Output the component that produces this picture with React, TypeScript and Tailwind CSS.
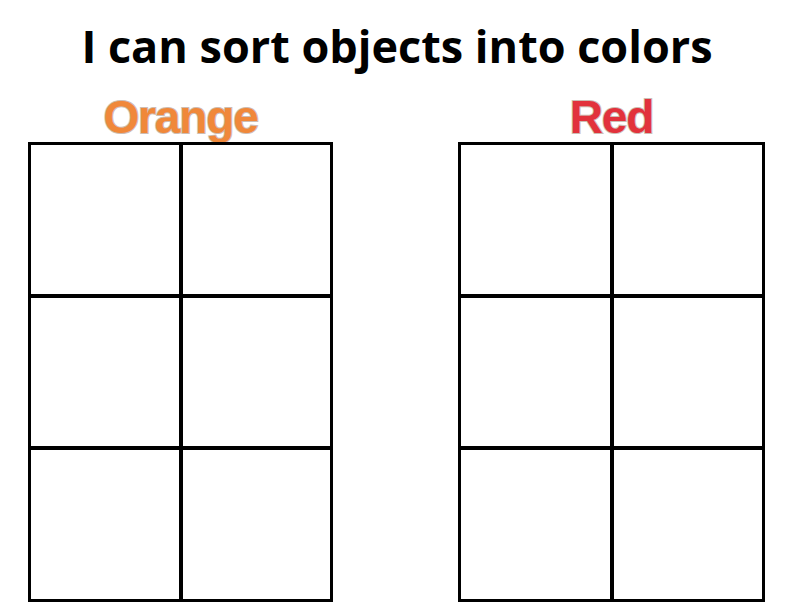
import React from 'react'

function SortGrid() {
  return (
    <div className="grid grid-cols-2 grid-rows-3 gap-[4px] bg-black p-[3px] h-[460px]">
      {Array.from({ length: 6 }).map((_, i) => (
        <div key={i} className="bg-white" />
      ))}
    </div>
  )
}

function ColorColumn({ label, color, width }: { label: string; color: string; width: string }) {
  return (
    <div className={`flex flex-col ${width}`}>
      <div
        className={`h-[51px] text-center text-[46px] font-bold leading-[52px] tracking-tight ${color}`}
        style={{ fontFamily: '"Liberation Sans", Arial, sans-serif', WebkitTextStroke: '2px #cdbdb4', paintOrder: 'stroke fill' }}
      >
        {label}
      </div>
      <SortGrid />
    </div>
  )
}

export default function App() {
  return (
    <div className="w-[794px] h-[614px] bg-white overflow-hidden">
      <h1
        className="pt-[12px] h-[91px] text-center text-[45px] font-bold leading-[68px] text-black"
        style={{ fontFamily: '"Open Sans", sans-serif' }}
      >
        I can sort objects into colors
      </h1>
      <div className="flex gap-[125px] pl-[28px]">
        <ColorColumn label="Orange" color="text-[#f0883a]" width="w-[305px]" />
        <ColorColumn label="Red" color="text-[#e2323c]" width="w-[307px]" />
      </div>
    </div>
  )
}
